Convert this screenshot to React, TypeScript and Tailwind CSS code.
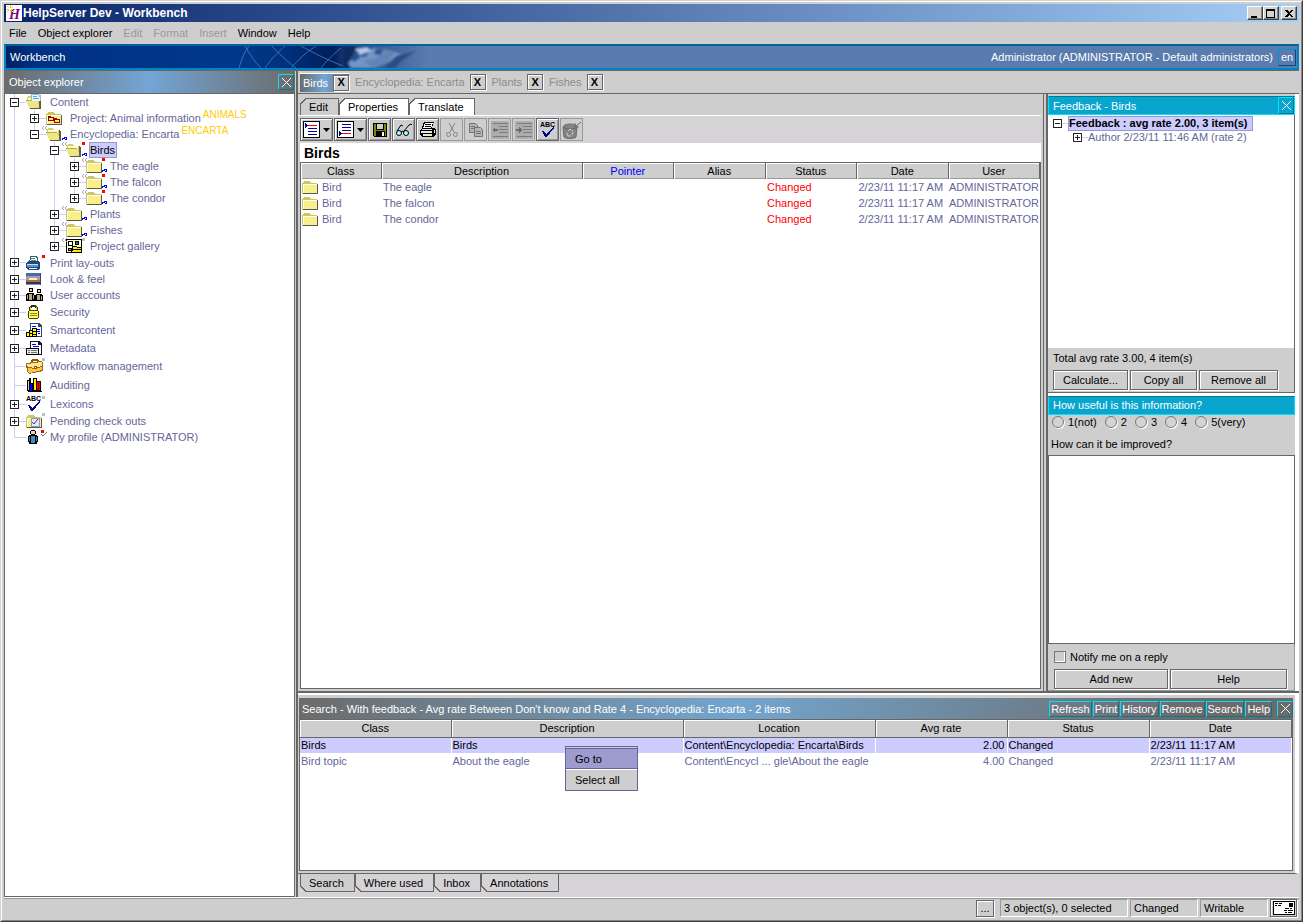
import { useState } from 'react'
import type { ReactNode } from 'react'
import clsx from 'clsx'

type IconName =
    'content' | 'project' | 'open' | 'closed' | 'gallery' | 'printer' | 'look' | 'users' | 'lock' |
    'smart' | 'meta' | 'case' | 'books' | 'abc' | 'pending' | 'profile'

type Node = {
    label: string
    icon: IconName
    height: string
    h: number
    // one entry for every ancestor level, true when its line goes on below this row
    guides: boolean[]
    toggle?: '+' | '-'
    last?: boolean
    tag?: string
    chevron?: boolean
    dot?: 'red' | 'gray'
    link?: boolean
}

const nodes: Node[] = [
    { label: 'Content', icon: 'content', height: 'h-4', h: 16, guides: [], toggle: '-' },
    { label: 'Project: Animal information', icon: 'project', height: 'h-4', h: 16, guides: [true], toggle: '+', tag: 'ANIMALS' },
    { label: 'Encyclopedia: Encarta', icon: 'open', height: 'h-4', h: 16, guides: [true], toggle: '-', last: true, tag: 'ENCARTA', chevron: true, link: true },
    { label: 'Birds', icon: 'open', height: 'h-4', h: 16, guides: [true, false], toggle: '-', chevron: true, dot: 'red', link: true },
    { label: 'The eagle', icon: 'closed', height: 'h-4', h: 16, guides: [true, false, true], toggle: '+', chevron: true, dot: 'red', link: true },
    { label: 'The falcon', icon: 'closed', height: 'h-4', h: 16, guides: [true, false, true], toggle: '+', chevron: true, dot: 'red', link: true },
    { label: 'The condor', icon: 'closed', height: 'h-4', h: 16, guides: [true, false, true], toggle: '+', last: true, chevron: true, dot: 'red', link: true },
    { label: 'Plants', icon: 'closed', height: 'h-4', h: 16, guides: [true, false], toggle: '+', chevron: true, link: true },
    { label: 'Fishes', icon: 'closed', height: 'h-4', h: 16, guides: [true, false], toggle: '+', chevron: true, link: true },
    { label: 'Project gallery', icon: 'gallery', height: 'h-4', h: 16, guides: [true, false], toggle: '+', last: true, chevron: true, dot: 'gray' },
    { label: 'Print lay-outs', icon: 'printer', height: 'h-[17px]', h: 17, guides: [], toggle: '+', dot: 'red' },
    { label: 'Look & feel', icon: 'look', height: 'h-4', h: 16, guides: [], toggle: '+' },
    { label: 'User accounts', icon: 'users', height: 'h-4', h: 16, guides: [], toggle: '+' },
    { label: 'Security', icon: 'lock', height: 'h-[18px]', h: 18, guides: [], toggle: '+' },
    { label: 'Smartcontent', icon: 'smart', height: 'h-[18px]', h: 18, guides: [], toggle: '+' },
    { label: 'Metadata', icon: 'meta', height: 'h-[18px]', h: 18, guides: [], toggle: '+' },
    { label: 'Workflow management', icon: 'case', height: 'h-[18px]', h: 18, guides: [], dot: 'gray' },
    { label: 'Auditing', icon: 'books', height: 'h-5', h: 20, guides: [] },
    { label: 'Lexicons', icon: 'abc', height: 'h-[18px]', h: 18, guides: [], toggle: '+', dot: 'gray' },
    { label: 'Pending check outs', icon: 'pending', height: 'h-4', h: 16, guides: [], toggle: '+', dot: 'gray' },
    { label: 'My profile (ADMINISTRATOR)', icon: 'profile', height: 'h-4', h: 16, guides: [], last: true },
]

const raised = 'border border-[#666] shadow-[inset_1px_1px_0_#fff,1px_1px_0_#fff]'
const cyanEdge = 'border border-[#00e0ff] border-r-[#007a94] border-b-[#007a94]'

const Folder = () => (
    <>
        <path d="M0 4h1V3h1V2h6v1h1v1h6v11H0z" fill="#cec663" />
        <path d="M1 5h14v9H1z" fill="#f7ef8c" />
        <path d="M1 5h14v1H2v8H1z" fill="#fffff0" />
        <path d="M15 5h1v10H1v-1h14z" fill="#5a5a4a" />
    </>
)

const OpenFolder = () => (
    <>
        <path d="M1 4l1-2h5l1 2h5v10H3z" fill="#d6ce6b" />
        <path d="M2 4h10v3H2z" fill="#fffbd0" />
        <path d="M0 7h11l4 7H4z" fill="#efe784" />
        <path d="M0 6h11v1H0z" fill="#b5ad4a" />
        <path d="M13 4h1v10h-1z" fill="#6b633a" />
        <path d="M14 5h1v10H4v-1h10z" fill="#5a5a4a" />
    </>
)

const icons: Record<IconName, ReactNode> = {
    content: (
        <>
            <OpenFolder />
            <path d="M6 0h7l2 2v5H6z" fill="#e7f7ff" />
            <path d="M5 0h8v1H6v6H5zM13 1h2v6h-1V3h-1z" fill="#94bdd6" />
            <path d="M7 2h4v1H7zM7 4h6v1H7z" fill="#5aa5d6" />
        </>
    ),
    project: (
        <>
            <Folder />
            <path d="M2 6h3v1h3v4H2zM8 8h3v1h3v4H8z" fill="#940000" />
            <path d="M3 8h4v2H3zM9 10h4v2H9z" fill="#ffef5a" />
        </>
    ),
    open: <OpenFolder />,
    closed: <Folder />,
    gallery: (
        <>
            <path d="M0 1h16v14H0z" fill="#000" />
            <path d="M1 2h14v12H1z" fill="#fffbc6" />
            <path d="M2 3h5v5H2zM9 3h4v4H9z" fill="#000" />
            <path d="M3 4h3v3H3z" fill="#fff" />
            <path d="M10 4h2v2h-2z" fill="#008484" />
            <path d="M2 10h4v3H2z" fill="#000" />
            <path d="M3 11h2v1H3z" fill="#4ac6c6" />
            <path d="M6 8h4l1 1h5v6H5l1-3z" fill="#000" />
            <path d="M7 9h3l1 1h4v1H7zM7 12h8v2H6z" fill="#ffe710" />
        </>
    ),
    printer: (
        <>
            <path d="M4 1h6l2 2v6H3z" fill="#425a73" />
            <path d="M5 2h5l1 2v4H4z" fill="#f7fbff" />
            <path d="M5 3h4v1H5zM5 5h5v1H5z" fill="#4a8c6b" />
            <path d="M0 8l2-2h10l2 2v5l-2 2H2l-2-2z" fill="#214a7b" />
            <path d="M1 9h11v1H1z" fill="#bddef7" />
            <path d="M1 10h11v2H1z" fill="#5a94c6" />
            <path d="M3 13h8v1H3z" fill="#e7f7ff" />
        </>
    ),
    look: (
        <>
            <path d="M0 2h15v12H0z" fill="#8c94ad" />
            <path d="M0 2h14v3H0z" fill="#4a6ba5" />
            <path d="M0 5h14v4H0z" fill="#a59ca5" />
            <path d="M3 7h8v2H3z" fill="#ffefc6" />
            <path d="M0 9h14v2H0z" fill="#a57342" />
            <path d="M0 11h14v2H0z" fill="#31315a" />
            <path d="M14 2h1v12h-1z" fill="#42426b" />
        </>
    ),
    users: (
        <>
            <path d="M3 1h4v4H3zM11 2h4v4h-4z" fill="#000" />
            <path d="M4 2h2v2H4zM12 3h2v2h-2z" fill="#ffcea5" />
            <path d="M1 6h7v2h1v6H0V7h1zM10 7h6v1h1v6h-8V8h1z" fill="#000" />
            <path d="M1 8h1v4H1zM3 7h3v6H3zM7 8h1v4H7zM11 8h3v5h-3zM15 9h1v4h-1z" fill="#b5ad84" />
        </>
    ),
    lock: (
        <>
            <path d="M5 1h5v1h1v1h1v4h-2V4H9V3H6v1H5v3H3V3h1V2h1z" fill="#31310a" />
            <path d="M4 3h1v4H4zM10 3h1v4h-1z" fill="#ded610" />
            <path d="M3 6h9v1h1v7h-1v1H3v-1H2V7h1z" fill="#42420a" />
            <path d="M3 7h9v7H3z" fill="#ffff63" />
            <path d="M4 9h7v1H4zM4 11h7v1H4z" fill="#948c08" />
        </>
    ),
    smart: (
        <>
            <path d="M4 1h9l3 3v11H4z" fill="#31427b" />
            <path d="M5 2h7v3h3v9H5z" fill="#fff" />
            <path d="M6 4h4v1H6zM6 6h3v1H6zM10 7h4v1h-4zM10 9h4v1h-4zM12 11h2v1h-2z" fill="#0000ff" />
            <path d="M6 6h5v9H0v-5h3V8h3z" fill="#000" />
            <path d="M7 7h3v2H7zM4 9h2v2H4zM7 10h3v2H7zM1 11h2v3H1zM4 12h2v2H4zM7 13h3v1H7z" fill="#ffff00" />
        </>
    ),
    meta: (
        <>
            <path d="M4 1h9l3 3v11H4z" fill="#101031" />
            <path d="M5 2h7v3h3v9H5z" fill="#fff" />
            <path d="M6 4h4v1H6zM7 6h6v1H7z" fill="#0000ff" />
            <path d="M0 8h13v7H0z" fill="#000" />
            <path d="M1 9h11v5H1z" fill="#e7e7e7" />
            <path d="M2 10h2v1H2zM5 10h6v1H5zM2 12h2v1H2zM5 12h6v1H5z" fill="#737373" />
        </>
    ),
    case: (
        <>
            <path d="M5 3l1-2h6l1 2v2h-2V3H7v2H5z" fill="#8c5a00" />
            <path d="M0 5l16-2 1 2v8L3 16l-2-2z" fill="#9c6b10" />
            <path d="M1 6l15-2v4l-7 2-7-1z" fill="#ffe794" />
            <path d="M2 10l7 1 7-2v3L4 15l-2-1z" fill="#f7c64a" />
            <path d="M8 8h3v3H8z" fill="#8c5a00" />
            <path d="M9 9h1v1H9z" fill="#fff" />
        </>
    ),
    books: (
        <>
            <path d="M1 3h2V1h2v5h2V1h4v3h4v10h1v1H2v-1H1z" fill="#000" />
            <path d="M2 4h1v9H2z" fill="#cecece" />
            <path d="M4 7h2v7H4z" fill="#0000ff" />
            <path d="M8 2h2v11H8z" fill="#ffef00" />
            <path d="M11 5h3v8h-3z" fill="#f70000" />
            <path d="M12 5h1v8h-1z" fill="#a50000" />
        </>
    ),
    abc: (
        <>
            <text x="0" y="5" fontSize="7" fontWeight="700" fill="#000">ABC</text>
            <path d="M2 9h2l2 3 7-7h1v1l-7 9H5z" fill="#000084" />
        </>
    ),
    pending: (
        <>
            <Folder />
            <path d="M5 5h8v8H5z" fill="#e7e7ff" stroke="#9494ad" />
            <path d="M6 9l2 2 4-5" stroke="#42426b" fill="none" shapeRendering="auto" />
        </>
    ),
    profile: (
        <>
            <path d="M5 1h4v1h1v3H9v1H5V5H4V2h1z" fill="#000" />
            <path d="M5 2h4v3H5z" fill="#ffce9c" />
            <path d="M3 6h8v1h1v6h-1v2H3v-2H2V7h1z" fill="#000" />
            <path d="M3 8h1v4H3zM5 7h4v7H5zM10 8h1v4h-1z" fill="#428cc6" />
            <path d="M15 1h3v3h-3z" fill="#ff0000" />
            <path d="M15 5l2 2 4-4" stroke="#737373" fill="none" shapeRendering="auto" />
        </>
    ),
}

const Cross = () => (
    <svg width="11" height="11" viewBox="0 0 11 11" stroke="currentColor" fill="none">
        <path d="M1 1l9 9M10 1l-9 9" />
    </svg>
)

const Toggle = ({ sign, onClick }: { sign: '+' | '-', onClick?: () => void }) => (
    <button aria-label={sign === '+' ? 'Expand' : 'Collapse'} onClick={onClick}
        className="relative z-10 flex h-[9px] w-[9px] shrink-0 bg-white">
        <svg width="9" height="9" shapeRendering="crispEdges">
            <path d="M0 0h9v9H0zM1 1v7h7V1z" fill="#222" fillRule="evenodd" />
            <path d={sign === '+' ? 'M2 4h5v1H2zM4 2h1v5H4z' : 'M2 4h5v1H2z'} fill="#222" />
        </svg>
    </button>
)

const TreeRow = ({ node, selected, onSelect }: { node: Node, selected: boolean, onSelect: () => void }) => {

    const mid = Math.floor(node.h / 2)

    return (
        <li className={clsx('flex items-center whitespace-nowrap', node.height)}>
            {node.guides.map((on, i) => (
                <svg key={i} width="20" height={node.h} className="shrink-0" shapeRendering="crispEdges">
                    {on ? <path d={`M8 0h1v${node.h}h-1z`} fill="#ccf" /> : null}
                </svg>
            ))}
            <span className="grid shrink-0 grid-cols-[20px] items-center">
                <svg width="20" height={node.h} className="col-start-1 row-start-1" shapeRendering="crispEdges">
                    <path d={`M8 0h1v${node.last ? mid : node.h}H8zM8 ${mid}h12v1H8z`} fill="#ccf" />
                </svg>
                {node.toggle ?
                    <span className="col-start-1 row-start-1 flex pl-1">
                        <Toggle sign={node.toggle} onClick={onSelect} />
                    </span> : null
                }
            </span>
            <svg width="24" height="16" viewBox="0 0 24 16" className="z-10 shrink-0 overflow-visible" shapeRendering="crispEdges">
                {icons[node.icon]}
                {node.chevron ? <path d="M-2 0l-2 2 2 2M1 0l-2 2 2 2" stroke="#9c9cce" fill="none" shapeRendering="auto" /> : null}
                {node.dot ? <path d="M16 0h3v3h-3z" fill={node.dot === 'red' ? '#ff0000' : '#c0c0c0'} /> : null}
                {node.link ? <path d="M16 12h2v2h-2zM17 13h2v1h-2zM18 11h3v3h-3zM19 12v1h1v-1z" fill="#0000ff" fillRule="evenodd" /> : null}
            </svg>
            <button onClick={onSelect}
                className={clsx('-ml-px h-4 border pr-px leading-[14px]', selected ? 'border-[#9999cc] bg-[#ccf] text-black' : 'border-transparent text-[#669]')}>
                {node.label}
            </button>
            {node.tag ? <span className="pb-[6px] text-[10px] leading-3 text-[#ffcc00]">{node.tag}</span> : null}
        </li>
    )
}

const Explorer = () => {

    const [selected, setSelected] = useState('Birds')

    return (
        <aside className="flex w-[291px] shrink-0 flex-col">
            <div className="flex h-[23px] items-center justify-between border-b border-[#666] bg-[linear-gradient(90deg,#6b6b6b,#73a5d6_50%,#6b6b6b)] pl-[5px] text-white">
                <h2>Object explorer</h2>
                <button aria-label="Close" className={clsx('mr-px flex h-4 w-4 items-center justify-center', cyanEdge)}><Cross /></button>
            </div>
            <ul className="flex-1 border-x border-b border-[#666] bg-white pl-px">
                {nodes.map((n) => (
                    <TreeRow key={n.label} node={n} selected={selected === n.label} onSelect={() => setSelected(n.label)} />
                ))}
            </ul>
        </aside>
    )
}

const Banner = () => (
    <header className="flex h-[26px] shrink-0 items-center justify-between border-2 border-[#0084c6] border-t-[#00639c] bg-[linear-gradient(90deg,#002163,#003184_30px,#00398c_230px,#5a7bad_420px,#5a7bad)] text-white">
        <h1 className="w-[232px] shrink-0 pl-1">Workbench</h1>
        <svg width="190" height="22" viewBox="0 0 190 22" className="shrink-0" fill="none">
            <defs>
                <linearGradient id="sea" x1="0" x2="1">
                    <stop offset="0" stopColor="#00388c" />
                    <stop offset="0.25" stopColor="#00317b" />
                    <stop offset="0.5" stopColor="#001e5a" />
                    <stop offset="0.6" stopColor="#284a84" />
                    <stop offset="1" stopColor="#5a7bad" />
                </linearGradient>
                <filter id="cloud"><feGaussianBlur stdDeviation="1" /></filter>
            </defs>
            <path d="M0 0h190v22H0z" fill="url(#sea)" />
            <g stroke="#4a84c6" strokeOpacity="0.75">
                <path d="M1 22C4 12 7 5 11 0M7 0c5 9 10 16 16 22M27 22C34 12 40 6 47 0M34 0c8 9 16 16 24 22M53 22C60 14 68 6 78 0M63 0c11 6 28 15 45 21M83 22c7-9 14-15 20-20" />
            </g>
            <g filter="url(#cloud)">
                <path d="M105 0h16l-7 9 6 13h-15z" fill="#102a63" />
                <path d="M110 17l8-8 9 2 8-9 16 2 12 4-12 8-14 6h-24z" fill="#7394c6" />
                <path d="M117 3l12-2 5 4-12 4zM132 13l12-4 6 4-12 5z" fill="#b5c6e7" />
                <path d="M125 15l14-4 10-7 8 2-8 11-14 5z" fill="#6384b5" />
                <path d="M112 12l6-4 5 3-7 5zM138 3l8 1-4 5-6-1z" fill="#29508c" />
                <path d="M146 22l12-12 20-5-12 8-10 9z" fill="#2a4c88" />
            </g>
        </svg>
        <p className="flex flex-1 items-center justify-end gap-[5px] pr-px whitespace-nowrap">
            Administrator (ADMINISTRATOR - Default administrators)
            <button className="h-[17px] w-[18px] border border-[#0094d6] border-r-[#004a84] border-b-[#004a84]">en</button>
        </p>
    </header>
)

const openTabs = ['Birds', 'Encyclopedia: Encarta', 'Plants', 'Fishes']

const DocumentTabs = () => (
    <div className="flex h-[23px] shrink-0 items-center border-b border-[#666] pl-[2px]">
        {openTabs.map((t, i) => (
            <div key={t} className={clsx('mr-[3px] flex h-[19px] items-center gap-[5px] pl-[3px]', i === 0 ? 'border-t border-white bg-[linear-gradient(90deg,#6b6b6b,#73a5d6_50%,#6b6b6b)] text-white' : 'text-[#8c8c8c]')}>
                <button>{t}</button>
                <button aria-label={'Close ' + t} className={clsx('flex h-4 w-4 items-center justify-center bg-[#cecece] leading-none font-bold text-black', raised)}>X</button>
            </div>
        ))}
    </div>
)

const EditTabs = () => (
    <div className="flex shrink-0 border-b border-white pt-1 pl-[2px]">
        {['Edit', 'Properties', 'Translate'].map((t, i) => (
            <div key={t} className="flex h-[17px]">
                <svg width="6" height="17" shapeRendering="crispEdges">
                    <path d="M0 17V6l6-6v17z" fill={i === 0 ? '#cecece' : '#fff'} />
                    <path d="M.5 17V6L6 .5" stroke="#666" fill="none" />
                </svg>
                <button className={clsx('border-t border-r border-[#666] pr-[10px] pl-[3px]', i === 0 ? 'bg-[#cecece]' : 'bg-white')}>{t}</button>
            </div>
        ))}
    </div>
)

const ListIcon = ({ flip }: { flip?: boolean }) => (
    <svg width="17" height="17" shapeRendering="crispEdges">
        <path d="M0 0h17v17H0z" fill="#000" />
        <path d="M1 1h15v15H1z" fill="#fff" />
        <g transform={flip ? 'translate(0 17) scale(1 -1)' : undefined}>
            <path d="M5 7h9v1H5zM5 10h9v1H5zM5 13h9v1H5z" fill="#0000a5" />
            <path d="M2 2h1v1h1v1h1v1H4v1H3v1H2z" fill="#000094" />
            <path d="M5 4h9v1H5z" fill="#ff0000" />
        </g>
    </svg>
)

const IndentIcon = ({ flip }: { flip?: boolean }) => (
    <svg width="18" height="18" shapeRendering="crispEdges">
        <path d="M0 0h18v18H0z" fill="#adadad" />
        <path d="M2 2h15v1H2zM2 15h15v1H2zM8 5h9v1H8zM8 8h9v1H8zM8 11h9v1H8z" fill="#7b7b7b" />
        <path d={flip ? 'M1 8h3V6l3 3-3 3v-2H1z' : 'M7 8H4V6L1 9l3 3v-2h3z'} fill="#6b6b6b" />
    </svg>
)

const tools: { name: string, icon: ReactNode, off?: boolean }[] = [
    {
        name: 'Save', icon:
            <svg width="16" height="16" shapeRendering="crispEdges">
                <path d="M1 1h14v14H2l-1-1z" fill="#000" />
                <path d="M2 2h2v6h8V2h2v12H2z" fill="#848400" />
                <path d="M5 2h6v5H5z" fill="#cecece" />
                <path d="M4 9h9v6H4z" fill="#000" />
                <path d="M10 10h2v4h-2z" fill="#fff" />
            </svg>
    },
    {
        name: 'Preview', icon:
            <svg width="18" height="16" stroke="#000" fill="none">
                <circle cx="4" cy="11" r="2.5" fill="#a5ffff" />
                <circle cx="11" cy="11" r="2.5" fill="#a5ffff" />
                <path d="M2 9l4-6 2 1M9 9l5-6 2-1 1 1M6 10l2-1 1 1" />
            </svg>
    },
    {
        name: 'Print', icon:
            <svg width="18" height="16" shapeRendering="crispEdges">
                <path d="M5 0h10l-2 6H3z" fill="#000" />
                <path d="M6 1h8l-2 5H4z" fill="#fff" />
                <path d="M6 2h6v1H6zM6 4h6v1H6z" fill="#000" />
                <path d="M3 6h12l2 1v5l-3 3H3l-2-2V8z" fill="#000" />
                <path d="M3 7h10v1H3zM2 9h11v2H2zM4 12h9v2H4zM15 8h1v3h-1z" fill="#e7e7e7" />
                <path d="M9 12h3v1H9z" fill="#ff0" />
            </svg>
    },
    {
        name: 'Cut', off: true, icon:
            <svg width="16" height="16" stroke="#848484" fill="none">
                <path d="M5 1l5 9M11 1l-5 9" />
                <circle cx="4.5" cy="12.5" r="2" /><circle cx="11.5" cy="12.5" r="2" />
            </svg>
    },
    {
        name: 'Copy', off: true, icon:
            <svg width="16" height="16" stroke="#737373" fill="#b5b5b5">
                <path d="M1.500 1.500h6l2 2v7h-8zM3 4.500h4M3 6.500h4" />
                <path d="M6.500 5.500h6l2 2v7h-8zM8 9.500h5M8 11.500h5" />
            </svg>
    },
    { name: 'Outdent', off: true, icon: <IndentIcon /> },
    { name: 'Indent', off: true, icon: <IndentIcon flip /> },
    { name: 'Spelling', icon: <svg width="16" height="16" className="overflow-visible" shapeRendering="crispEdges">{icons.abc}</svg> },
    {
        name: 'Recycle', off: true, icon:
            <svg width="20" height="18" fill="#848484">
                <ellipse cx="8" cy="5.500" rx="6.500" ry="2.500" stroke="#6b6b6b" />
                <path d="M1 6l1 10c2 2 10 2 12 0l1-10c-3 3-11 3-14 0z" stroke="#6b6b6b" />
                <path d="M6 10l2-2 3 2M5 12l1 3h3M11 11l-1 3" stroke="#cecece" fill="none" />
                <path d="M19 1l-5 4M13 2v4h4" stroke="#6b6b6b" fill="none" />
            </svg>
    },
]

const Toolbar = () => (
    <div className="flex shrink-0 bg-[#d6d3d6] py-[2px] pl-[2px]">
        {[false, true].map((flip) => (
            <button key={String(flip)} aria-label={flip ? 'Insert after' : 'Insert before'}
                className="mr-px flex h-[23px] w-[33px] items-center justify-between border border-[#666] bg-[#cecece] pr-[2px] pl-[2px] shadow-[inset_1px_1px_0_#fff,inset_-1px_-1px_0_#999]">
                <ListIcon flip={flip} />
                <svg width="7" height="4"><path d="M0 0h7L3.500 4z" /></svg>
            </button>
        ))}
        {tools.map((t) => (
            <button key={t.name} aria-label={t.name} disabled={t.off}
                className={clsx('mr-px flex h-[23px] w-[23px] items-center justify-center border bg-[#cecece]', t.off ? 'border-[#999]' : 'border-[#666] shadow-[inset_1px_1px_0_#fff,inset_-1px_-1px_0_#999]')}>
                {t.icon}
            </button>
        ))}
    </div>
)

const birds = ['The eagle', 'The falcon', 'The condor']

const DetailTable = () => (
    <div className="flex-1 border border-[#666] bg-white">
        <table className="w-full table-fixed border-collapse whitespace-nowrap">
            <colgroup>
                <col className="w-[80px]" /><col className="w-[201px]" /><col /><col /><col /><col /><col />
            </colgroup>
            <thead>
                <tr className="h-4">
                    {['Class', 'Description', 'Pointer', 'Alias', 'Status', 'Date', 'User'].map((c) => (
                        <th key={c} className={clsx('border-r border-[#666] bg-[#cecece] p-0 font-normal shadow-[inset_1px_1px_0_#fff,inset_0_-1px_0_#999]', c === 'Pointer' && 'text-[#0000ff]')}>{c}</th>
                    ))}
                </tr>
            </thead>
            <tbody className="text-[#669]">
                {birds.map((b) => (
                    <tr key={b} className="h-4">
                        <td className="p-0 pl-px">
                            <span className="flex h-4 items-center gap-[3px]">
                                <svg width="17" height="16" shapeRendering="crispEdges"><Folder /></svg>Bird
                            </span>
                        </td>
                        <td className="p-0 pl-[2px]">{b}</td>
                        <td></td>
                        <td></td>
                        <td className="p-0 pl-[2px] text-[#ff0000]">Changed</td>
                        <td className="p-0 pl-[2px]">2/23/11 11:17 AM</td>
                        <td className="p-0 pl-px">ADMINISTRATOR</td>
                    </tr>
                ))}
            </tbody>
        </table>
    </div>
)

const CyanBar = ({ title, close }: { title: string, close?: boolean }) => (
    <div className="flex h-[19px] shrink-0 items-center justify-between border border-[#00e0ff] border-t-[#007a94] bg-[#08a5ce] pl-1 text-white">
        <h2>{title}</h2>
        {close ? <button aria-label="Close" className={clsx('flex h-[17px] w-4 items-center justify-center', cyanEdge)}><Cross /></button> : null}
    </div>
)

const PushButton = ({ children, className }: { children: ReactNode, className?: string }) => (
    <button className={clsx('h-5 bg-[#cecece]', raised, className)}>{children}</button>
)

const rates = ['1(not)', '2', '3', '4', '5(very)']

const Feedback = () => (
    <aside className="flex w-[253px] shrink-0 flex-col border-r-4 border-l-2 border-r-white border-l-[#666] pt-[2px]">
        <CyanBar title="Feedback - Birds" close />
        <ul className="flex-[232_1_0px] border-r border-[#666] bg-white pl-[5px] whitespace-nowrap">
            <li className="flex h-4 items-center">
                <Toggle sign="-" />
                <span className="h-px w-[6px] bg-[#ccf]" />
                <button className="h-[15px] border border-[#99c] bg-[#ccf] pr-1 leading-[13px] font-bold">Feedback : avg rate 2.00, 3 item(s)</button>
            </li>
            <li className="flex h-3 items-center pl-5 text-[#669]">
                <Toggle sign="+" />
                <span className="h-px w-[6px] bg-[#ccf]" />
                <button>Author 2/23/11 11:46 AM (rate 2)</button>
            </li>
        </ul>
        <div className="h-[45px] border-r border-b border-[#666] pt-[3px] pl-[5px]">
            <p className="h-[19px]">Total avg rate 3.00, 4 item(s)</p>
            <div className="flex gap-[2px]">
                <PushButton className="w-[75px]">Calculate...</PushButton>
                <PushButton className="w-[67px]">Copy all</PushButton>
                <PushButton className="w-[79px]">Remove all</PushButton>
            </div>
        </div>
        <div className="h-[3px] bg-white" />
        <CyanBar title="How useful is this information?" />
        <fieldset className="h-[22px]">
            <div className="flex h-full items-center gap-2 pl-1 whitespace-nowrap">
                {rates.map((r) => (
                    <label key={r} className="flex items-center gap-1">
                        <input type="radio" name="rate" className="h-3 w-3 appearance-none rounded-full border border-[#777] bg-[#d6d3d6] shadow-[1px_1px_0_#fff] checked:bg-[#333]" />{r}
                    </label>
                ))}
            </div>
        </fieldset>
        <label htmlFor="improve" className="h-[18px] pl-[3px]">How can it be improved?</label>
        <textarea id="improve" className="block w-full flex-[179_1_0px] resize-none border border-[#666] bg-white p-1 outline-none" />
        <div className="h-[47px] border-r border-b border-[#999] pt-[2px] pl-[6px]">
            <label className="flex h-[23px] items-center gap-1 pb-px">
                <input type="checkbox" className="h-3 w-3 appearance-none border border-[#777] bg-[#cecece] shadow-[inset_-1px_-1px_0_#fff] checked:bg-[#333]" />
                Notify me on a reply
            </label>
            <div className="flex gap-[2px]">
                <PushButton className="w-[114px]">Add new</PushButton>
                <PushButton className="w-[117px]">Help</PushButton>
            </div>
        </div>
    </aside>
)

const results = [
    ['Birds', 'Birds', 'Content\\Encyclopedia: Encarta\\Birds', '2.00', 'Changed', '2/23/11 11:17 AM'],
    ['Bird topic', 'About the eagle', 'Content\\Encycl ... gle\\About the eagle', '4.00', 'Changed', '2/23/11 11:17 AM'],
]

const SearchPanel = () => (
    <section className="flex h-[204px] shrink-0 flex-col border-t-2 border-white bg-[#d6d3d6]">
        <div className="flex min-h-0 flex-1 flex-col border-r-4 border-b border-r-white border-b-[#666] bg-[#cecece] pt-[3px] pr-[2px] pb-[2px] pl-px">
            <div className="flex h-[21px] items-center justify-between bg-[linear-gradient(90deg,#6b6b6b,#73a5ce_44%,#6b6b6b_90%)] pl-[3px] whitespace-nowrap text-white">
                <h2>Search - With feedback - Avg rate Between Don't know and Rate 4 - Encyclopedia: Encarta - 2 items</h2>
                <div className="flex gap-px">
                    {['Refresh', 'Print', 'History', 'Remove', 'Search', 'Help'].map((b) => (
                        <button key={b} className={clsx('h-4 px-px leading-[14px]', cyanEdge)}>{b}</button>
                    ))}
                    <button aria-label="Close" className={clsx('ml-1 flex h-4 w-4 items-center justify-center', cyanEdge)}><Cross /></button>
                </div>
            </div>
            <div className="relative flex-1 border border-[#666] bg-white">
                <table className="w-full table-fixed border-collapse whitespace-nowrap">
                    <colgroup>
                        <col className="w-[151px]" /><col className="w-[232px]" /><col className="w-[192px]" />
                        <col className="w-[132px]" /><col className="w-[142px]" /><col />
                    </colgroup>
                    <thead>
                        <tr className="h-[17px]">
                            {['Class', 'Description', 'Location', 'Avg rate', 'Status', 'Date'].map((c) => (
                                <th key={c} className="border-r border-b border-[#666] bg-[#cecece] p-0 font-normal shadow-[inset_1px_1px_0_#fff]">{c}</th>
                            ))}
                        </tr>
                    </thead>
                    <tbody>
                        {results.map((r, i) => (
                            <tr key={r[0]} className={clsx('h-4', i === 0 ? 'bg-[#ccf]' : 'text-[#669]')}>
                                {r.map((v, j) => (
                                    <td key={j} className={clsx('border-r border-white p-0 pl-px', j === 3 && 'pr-[2px] text-right')}>{v}</td>
                                ))}
                            </tr>
                        ))}
                    </tbody>
                </table>
                <div role="menu" className="absolute top-[26px] left-[265px] z-20 w-[73px] border border-[#669] bg-[#cecece]">
                    <button role="menuitem" className="mt-px block h-[21px] w-full border-y border-[#669] bg-[#9c9cce] pl-[9px] text-left">Go to</button>
                    <button role="menuitem" className="block h-[21px] w-full border-t border-white pl-[9px] text-left">Select all</button>
                </div>
            </div>
        </div>
        <div className="flex h-[23px] shrink-0 pl-[2px]">
            {['Search', 'Where used', 'Inbox', 'Annotations'].map((t, i) => (
                <div key={t} className="flex h-[18px]">
                    <svg width="6" height="18" shapeRendering="crispEdges">
                        <path d="M0 0v12l6 6V0z" fill={i === 0 ? '#cecece' : '#d6d3d6'} />
                        <path d="M.5 0v12L6 17.500" stroke="#666" fill="none" />
                    </svg>
                    <button className={clsx('border-r border-b border-[#666] pr-[10px] pl-[3px]', i === 0 && 'bg-[#cecece]')}>{t}</button>
                </div>
            ))}
        </div>
    </section>
)

const cell = 'flex h-[18px] items-center border border-[#999] border-r-white border-b-white pl-[3px]'

const StatusBar = () => (
    <footer className="flex h-[21px] shrink-0 items-center justify-end gap-[2px] border-t border-white pr-[2px] shadow-[inset_0_1px_0_#999]">
        <button className={clsx('mr-1 h-[17px] w-[18px] leading-none', raised)}>...</button>
        <p className={clsx('w-[128px]', cell)}>3 object(s), 0 selected</p>
        <p className={clsx('w-[68px]', cell)}>Changed</p>
        <p className={clsx('w-[68px]', cell)}>Writable</p>
        <button aria-label="Messages" className={clsx('flex h-[18px] w-[27px] items-center justify-center', raised)}>
            <svg width="22" height="14" shapeRendering="crispEdges">
                <path d="M0 0h22v14H0z" />
                <path d="M1 1h20v12H1z" fill="#fff" />
                <path d="M2 2h3v1H2zM6 2h3v1H6zM2 4h2v1H2zM5 4h3v1H5zM16 2h4v4h-4zM12 7h4v1h-4zM17 7h2v1h-2zM11 9h3v1h-3zM15 9h5v1h-5zM12 11h2v1h-2zM15 11h4v1h-4z" />
            </svg>
        </button>
    </footer>
)

const menus = [['File'], ['Object explorer'], ['Edit', 'off'], ['Format', 'off'], ['Insert', 'off'], ['Window'], ['Help']]

const TitleBar = () => (
    <div className="flex h-[18px] shrink-0 items-center bg-[linear-gradient(90deg,#08246b,#a5cef7)] px-[2px] text-[12px] font-bold text-white">
        <svg width="16" height="16" shapeRendering="crispEdges">
            <path d="M0 0h16v16H0z" fill="#fff" />
            <text x="3" y="14" fontSize="14" fontStyle="italic" fontWeight="700" fontFamily="Liberation Serif, serif" fill="#840084">H</text>
            <path d="M4 0v7M0 4h7M1 1l6 6M7 1L1 7" stroke="#e7ce42" fill="none" />
            <path d="M3 3h2v2H3z" fill="#fff" />
        </svg>
        <span className="flex-1 pl-px">HelpServer Dev - Workbench</span>
        {['Minimize', 'Maximize', 'Close'].map((b) => (
            <button key={b} aria-label={b}
                className={clsx('flex h-[14px] w-4 items-center justify-center border border-white border-r-[#404040] border-b-[#404040] bg-[#d6d3ce] text-black shadow-[inset_-1px_-1px_0_#848484]', b === 'Close' && 'ml-[2px]')}>
                <svg width="10" height="9" shapeRendering="crispEdges">
                    {b === 'Minimize' ? <path d="M1 7h6v2H1z" /> : null}
                    {b === 'Maximize' ? <path d="M0 0h9v9H0zM1 2v6h7V2z" fillRule="evenodd" /> : null}
                    {b === 'Close' ? <path d="M1 1h2l2 2 2-2h2L6 4.500 9 8H7L5 6 3 8H1l3-3.500z" /> : null}
                </svg>
            </button>
        ))}
    </div>
)

export default function App() {
    return (
        <div className="flex h-screen flex-col border border-[#d6d3ce] border-r-[#404040] border-b-[#404040] bg-[#cecece] font-['Liberation_Sans',Arial,sans-serif] text-[11px] leading-[14px] text-black">
            <div className="flex min-h-0 flex-1 flex-col border border-white border-r-[#848484] border-b-[#848484] p-[2px]">
                <TitleBar />
                <nav className="flex h-[22px] shrink-0 items-center gap-[11px] pl-[5px]">
                    {menus.map(([m, off]) => (
                        <button key={m} disabled={!!off} className={clsx(off && 'text-[#999]')}>{m}</button>
                    ))}
                </nav>
                <Banner />
                <div className="flex min-h-0 flex-1 border-t border-[#666]">
                    <Explorer />
                    <main className="ml-px flex min-w-0 flex-1 flex-col border-l-2 border-[#666]">
                        <DocumentTabs />
                        <div className="flex min-h-0 flex-1 border-b-2 border-[#666]">
                            <section className="mr-[2px] flex min-w-0 flex-1 flex-col border-r border-[#666] pr-[2px] pb-[2px]">
                                <EditTabs />
                                <Toolbar />
                                <h2 className="ml-[2px] flex h-[19px] shrink-0 items-center bg-white pl-1 text-[14px] leading-none font-bold">Birds</h2>
                                <div className="ml-[2px] flex min-h-0 flex-1 flex-col">
                                    <DetailTable />
                                </div>
                            </section>
                            <Feedback />
                        </div>
                        <SearchPanel />
                    </main>
                </div>
                <StatusBar />
            </div>
        </div>
    )
}
